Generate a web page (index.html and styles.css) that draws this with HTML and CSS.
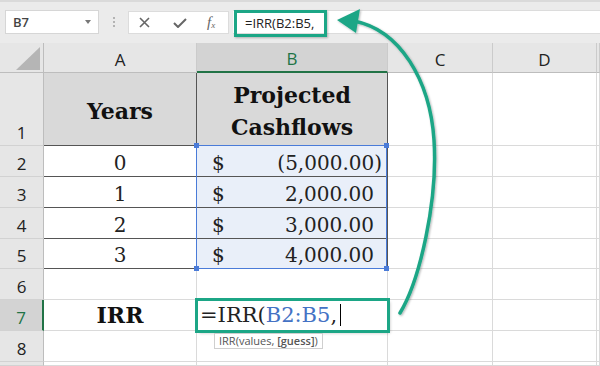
FILE: index.html
```html
<!DOCTYPE html>
<html lang="en">
<head>
    <meta charset="UTF-8">
    <title>IRR formula</title>
    <link rel="stylesheet" href="styles.css">
</head>
<body>
    <div class="toolbar">
        <div class="name-box"><span>B7</span><span class="caret"></span></div>
        <div class="grip"><i></i><i></i><i></i></div>
        <div class="fx-buttons">
            <svg class="btn-x" width="11" height="11" viewBox="0 0 11 11"><path d="M1 1L10 10M10 1L1 10" stroke="#666" stroke-width="1.6" fill="none"/></svg>
            <svg class="btn-ok" width="14" height="10" viewBox="0 0 14 10"><path d="M1 5L5 9L13 1" stroke="#666" stroke-width="2" fill="none"/></svg>
            <span class="btn-fx">f<sub>x</sub></span>
        </div>
        <div class="formula-input"><span class="formula-text">=IRR(B2:B5,</span></div>
    </div>

    <div class="sheet">
        <!-- column headers -->
        <div class="corner"><i></i></div>
        <div class="ch">A</div>
        <div class="ch sel">B</div>
        <div class="ch">C</div>
        <div class="ch">D</div>
        <div class="ch"></div>

        <!-- row 1 -->
        <div class="rh">1</div>
        <div class="cell tbl th">Years</div>
        <div class="cell tbl th">Projected<br>Cashflows</div>
        <div class="cell"></div><div class="cell"></div><div class="cell"></div>

        <!-- rows 2-5 -->
        <div class="rh">2</div>
        <div class="cell tbl num">0</div>
        <div class="cell tbl money first">
            <span>$</span><span>(5,000.00)</span>
            <!-- reference highlight B2:B5 -->
            <div class="ref"><i class="tl"></i><i class="tr"></i><i class="bl"></i><i class="br"></i></div>
        </div>
        <div class="cell"></div><div class="cell"></div><div class="cell"></div>

        <div class="rh">3</div>
        <div class="cell tbl num">1</div>
        <div class="cell tbl money"><span>$</span><span class="pos">2,000.00</span></div>
        <div class="cell"></div><div class="cell"></div><div class="cell"></div>

        <div class="rh">4</div>
        <div class="cell tbl num">2</div>
        <div class="cell tbl money"><span>$</span><span class="pos">3,000.00</span></div>
        <div class="cell"></div><div class="cell"></div><div class="cell"></div>

        <div class="rh">5</div>
        <div class="cell tbl num">3</div>
        <div class="cell tbl money"><span>$</span><span class="pos">4,000.00</span></div>
        <div class="cell"></div><div class="cell"></div><div class="cell"></div>

        <div class="rh">6</div>
        <div class="cell"></div><div class="cell"></div><div class="cell"></div><div class="cell"></div><div class="cell"></div>

        <div class="rh sel">7</div>
        <div class="cell label">IRR</div>
        <div class="cell active">
            <span>=IRR(</span><span class="arg">B2:B5</span><span>,</span><span class="cursor"></span>
            <div class="tip">IRR(values, <b>[guess]</b>)</div>
        </div>
        <div class="cell"></div><div class="cell"></div><div class="cell"></div>

        <div class="rh">8</div>
        <div class="cell"></div><div class="cell"></div><div class="cell"></div><div class="cell"></div><div class="cell"></div>

        <div class="rh"></div>
        <div class="cell"></div><div class="cell"></div><div class="cell"></div><div class="cell"></div><div class="cell"></div>
    </div>

    <svg class="arrow" width="600" height="366" viewBox="0 0 600 366">
        <defs>
            <filter id="shade" x="-20%" y="-20%" width="140%" height="140%">
                <feDropShadow dx="1" dy="1" stdDeviation="1" flood-opacity="0.3"/>
            </filter>
        </defs>
        <g filter="url(#shade)">
            <path d="M400 313 C420 280 438 200 434 140 C430 80 400 30 354 21" stroke="#1ca686" stroke-width="3.5" fill="none" stroke-linecap="round"/>
            <polygon points="337,20 360,9 356,33" fill="#1ca686"/>
        </g>
    </svg>
</body>
</html>
```

FILE: styles.css
```css
* {
    margin: 0;
    padding: 0;
    box-sizing: border-box;
}

body {
    width: 600px;
    height: 366px;
    overflow: hidden;
    position: relative;
    background: #ebebeb;
    font-family: 'Open Sans', 'Noto Sans', sans-serif;
    color: #333;
}

/* formula bar */
.toolbar {
    height: 43px;
    display: flex;
    align-items: flex-start;
    padding: 8px 0 0 5px;
    border-top: 2px solid #dadada;
}

.name-box {
    width: 94px;
    height: 24px;
    background: #fff;
    border: 1px solid #d6d6d6;
    display: flex;
    align-items: center;
    justify-content: space-between;
    padding: 0 7px 0 7px;
    font-size: 13px;
    font-weight: 600;
    color: #444;
}

.caret {
    border-left: 3.5px solid transparent;
    border-right: 3.5px solid transparent;
    border-top: 4px solid #777;
}

.grip {
    width: 29px;
    display: flex;
    flex-direction: column;
    align-items: center;
    gap: 2px;
    padding-top: 7px;
}

.grip i {
    width: 2px;
    height: 2px;
    background: #b3b3b3;
}

.fx-buttons {
    width: 101px;
    height: 23px;
    margin-top: 1px;
    background: #fff;
    border: 1px solid #dcdcdc;
    display: flex;
    align-items: center;
    padding-left: 10px;
}

.btn-ok {
    margin-left: 23px;
}

.btn-fx {
    margin-left: 20px;
    font-family: 'Liberation Serif', serif;
    font-style: italic;
    font-size: 15px;
    color: #666;
    line-height: 1;
}

.btn-fx sub {
    font-size: 9px;
    vertical-align: -1px;
}

.formula-input {
    flex: 1;
    height: 24px;
    margin-left: 4px;
    background: #fff;
    border-top: 1px solid #dcdcdc;
    border-bottom: 1px solid #dcdcdc;
}

.formula-text {
    display: inline-block;
    width: 93px;
    height: 27px;
    margin: -3px 0 0 1px;
    padding-left: 8px;
    border: 3px solid #1ca686;
    box-shadow: 1px 1px 2px rgba(0, 0, 0, 0.25);
    font-size: 13px;
    line-height: 21px;
    color: #222;
}

/* worksheet grid */
.sheet {
    display: grid;
    grid-template-columns: 44px 153px 191px 105px 104px 1fr;
    grid-template-rows: 30px 73px 31px 31px 31px 30px 31px 31px 31px 1fr;
    height: 323px;
    background: #fff;
}

.corner, .ch, .rh {
    background: #e6e6e6;
}

.corner {
    display: flex;
    justify-content: flex-end;
    align-items: flex-end;
    padding: 0 3px 2px 0;
    border-right: 1px solid #bdbdbd;
    border-bottom: 1px solid #bdbdbd;
}

.corner i {
    width: 24px;
    height: 23px;
    background: #b5b5b5;
    clip-path: polygon(100% 0, 100% 100%, 0 100%);
}

.ch {
    display: flex;
    align-items: center;
    justify-content: center;
    padding-top: 3px;
    font-size: 17px;
    color: #222;
    border-right: 1px solid #cbcbcb;
    border-bottom: 1px solid #bdbdbd;
}

.ch.sel {
    background: #d3d3d3;
    color: #217346;
    border-bottom: 2px solid #217346;
}

.rh {
    display: flex;
    align-items: flex-end;
    justify-content: center;
    padding-bottom: 2px;
    font-size: 17px;
    line-height: 20px;
    color: #222;
    border-right: 1px solid #bdbdbd;
    border-bottom: 1px solid #d2d2d2;
}

.rh.sel {
    background: #d3d3d3;
    color: #217346;
    border-right: 2px solid #217346;
}

.cell {
    border-right: 1px solid #dadada;
    border-bottom: 1px solid #dadada;
    font-family: 'DejaVu Serif', 'Liberation Serif', serif;
    font-size: 20px;
    color: #222;
}

.tbl {
    border-right-color: #555;
    border-bottom-color: #555;
}

.th {
    background: #d9d9d9;
    display: flex;
    align-items: center;
    justify-content: center;
    text-align: center;
    font-size: 22px;
    font-weight: bold;
    line-height: 32px;
    color: #111;
    padding-top: 3px;
}

.num {
    display: flex;
    align-items: flex-end;
    justify-content: center;
    line-height: 24px;
    padding-bottom: 1px;
}

.money {
    background: #e9eff9;
    display: flex;
    align-items: flex-end;
    justify-content: space-between;
    line-height: 24px;
    padding: 0 5px 1px 15px;
}

.money .pos {
    padding-right: 8px;
}

.money.first {
    position: relative;
}

.ref {
    position: absolute;
    top: -1px;
    left: -1px;
    right: 0;
    height: 124px;
    z-index: 1;
    border: 1px solid #4a7bd8;
    pointer-events: none;
}

.ref i {
    position: absolute;
    width: 5px;
    height: 5px;
    background: #4a7bd8;
}

.ref .tl { top: -3px; left: -3px; }
.ref .tr { top: -3px; right: -3px; }
.ref .bl { bottom: -3px; left: -3px; }
.ref .br { bottom: -3px; right: -3px; }

.label {
    display: flex;
    align-items: center;
    justify-content: center;
    font-size: 22px;
    font-weight: bold;
    color: #111;
}

.active {
    position: relative;
    z-index: 2;
    display: flex;
    align-items: center;
    padding-left: 3px;
    outline: 3px solid #1ca686;
    outline-offset: -1px;
    box-shadow: 2px 2px 3px rgba(0, 0, 0, 0.25);
    font-size: 21px;
    white-space: nowrap;
}

.active .arg {
    color: #4472c4;
}

.cursor {
    display: inline-block;
    width: 1px;
    height: 22px;
    margin-left: 3px;
    background: #000;
}

.tip {
    position: absolute;
    top: calc(100% + 3px);
    left: 17px;
    height: 16px;
    padding: 0 4px;
    background: #fff;
    border: 1px solid #cfcfcf;
    font-family: 'Open Sans', 'Noto Sans', sans-serif;
    font-size: 11px;
    line-height: 14px;
    color: #555;
}

.tip b {
    font-weight: 600;
}

.arrow {
    position: absolute;
    top: 0;
    left: 0;
    z-index: 5;
    pointer-events: none;
}
```
